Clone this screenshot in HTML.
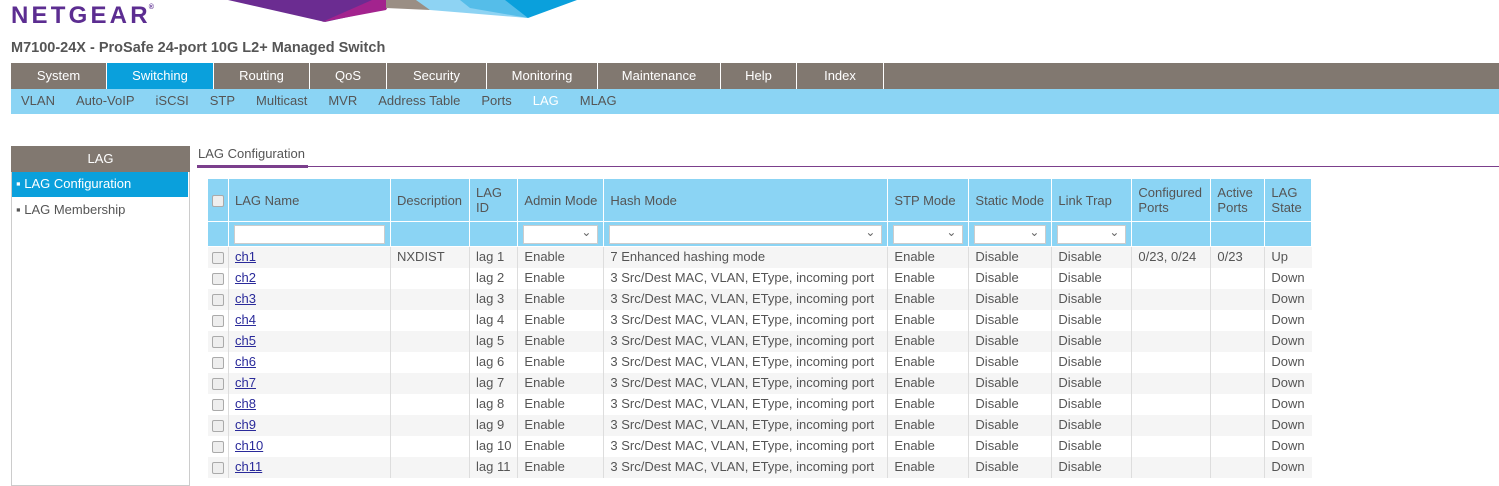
<!DOCTYPE html>
<html><head><meta charset="utf-8"><style>
*{box-sizing:border-box;margin:0;padding:0}
body{width:1499px;height:480px;overflow:hidden;background:#fff;font-family:"Liberation Sans",Arial,sans-serif;position:relative;color:#555}
.abs{position:absolute}
.logo{left:11px;top:2px;font-size:24px;font-weight:bold;color:#5c2d91;letter-spacing:3.2px}
.logo sup{font-size:7px;vertical-align:top;letter-spacing:0;position:relative;top:2px;left:-2px}
.title{left:11px;top:40px;font-size:14.5px;font-weight:bold;color:#555;letter-spacing:0}
.nav{left:11px;top:63px;width:1488px;height:26px;background:#817870;display:flex}
.nav div{color:#fff;font-size:13px;text-align:center;line-height:25px;border-right:1px solid #fff;height:26px}
.nav .on{background:#0aa0dc}
.sub{left:11px;top:89px;width:1488px;height:25px;background:#8bd4f4;font-size:13px;line-height:24px;color:#555}
.sub span{margin-left:9px;margin-right:12px}
.lp{left:11px;top:146px;width:179px;height:340px;border:1px solid #ccc;border-top:none}
.lph{left:11px;top:146px;width:179px;height:26px;background:#817870;color:#fff;font-size:13px;text-align:center;line-height:25px}
.lpa{left:12px;top:172px;width:176px;height:25px;background:#0aa0dc;color:#fff;font-size:13px;line-height:24px;padding-left:4px}
.lpb{left:12px;top:200px;font-size:13px;line-height:20px;padding-left:4px;color:#555}
.tab{left:198px;top:146px;font-size:13px;color:#555}
.tabline{left:197px;top:166px;width:1302px;height:1px;background:#7b3f8c}
.tabul{left:197px;top:165px;width:111px;height:3px;background:#7b3f8c}
table{position:absolute;left:207px;top:178px;border-collapse:collapse;table-layout:fixed;font-size:13px;color:#555}
th{background:#8bd4f4;font-weight:normal;text-align:left;border:1px solid #fff;padding:0 6px;line-height:15px;vertical-align:middle;height:43px}
tr.f td{background:#8bd4f4;height:25px;border:1px solid #fff;padding:0 5px}
td{height:21px;padding:0 6px;border-left:1px solid #ddd;white-space:nowrap;line-height:20px}
tr.g td{background:#f5f5f5}
td a{text-decoration:underline;color:#2a2a9a}
.cb{display:inline-block;width:12px;height:12px;border:1px solid #aaa;border-radius:2px;background:#eee;vertical-align:middle}
.in{background:#fff;border:1px solid #ccc;height:19px;width:100%;position:relative}
.sel::after{content:"⌄";position:absolute;right:6px;top:-4px;font-size:12px;color:#666}
</style></head><body>
<svg class="abs" style="left:0;top:0" width="620" height="30">
<polygon points="228,0 386,0 385,9 325,22" fill="#6b2c91"/>
<polygon points="372,0 392,0 386,10 322,22" fill="#a3238e"/>
<polygon points="386,0 420,0 430,10 386,8" fill="#9a8e84"/>
<polygon points="416,0 510,0 528,18 430,10" fill="#8ed3f3"/>
<polygon points="460,0 520,0 528,18 470,8" fill="#55bde9"/>
<polygon points="505,0 577,0 528,18" fill="#0aa0dc"/>
</svg>
<div class="abs logo">NETGEAR<sup>®</sup></div>
<div class="abs title">M7100-24X - ProSafe 24-port 10G L2+ Managed Switch</div>
<div class="abs nav">
<div style="width:96px">System</div><div class="on" style="width:107px">Switching</div><div style="width:96px">Routing</div><div style="width:77px">QoS</div><div style="width:100px">Security</div><div style="width:111px">Monitoring</div><div style="width:123px">Maintenance</div><div style="width:76px">Help</div><div style="width:87px">Index</div>
</div>
<div class="abs sub"><span style="margin-left:10px">VLAN</span><span>Auto-VoIP</span><span>iSCSI</span><span>STP</span><span>Multicast</span><span>MVR</span><span>Address Table</span><span>Ports</span><span style="color:#fff">LAG</span><span>MLAG</span></div>
<div class="abs lp"></div>
<div class="abs lph">LAG</div>
<div class="abs lpa">▪ LAG Configuration</div>
<div class="abs lpb">▪ LAG Membership</div>
<div class="abs tab">LAG Configuration</div>
<div class="abs tabline"></div><div class="abs tabul"></div>
<table>
<colgroup><col style="width:21px"><col style="width:162px"><col style="width:79px"><col style="width:48px"><col style="width:86px"><col style="width:284px"><col style="width:81px"><col style="width:83px"><col style="width:80px"><col style="width:79px"><col style="width:54px"><col style="width:47px"></colgroup>
<tr><th style="padding:0 4px"><span class="cb"></span></th><th>LAG Name</th><th>Description</th><th>LAG<br>ID</th><th>Admin Mode</th><th>Hash Mode</th><th>STP Mode</th><th>Static Mode</th><th>Link Trap</th><th>Configured<br>Ports</th><th>Active<br>Ports</th><th>LAG<br>State</th></tr>
<tr class="f"><td></td><td><div class="in"></div></td><td></td><td></td><td><div class="in sel"></div></td><td><div class="in sel"></div></td><td><div class="in sel"></div></td><td><div class="in sel"></div></td><td><div class="in sel"></div></td><td></td><td></td><td></td></tr>
<tr class="g"><td style="padding:0 4px;border-left:none"><span class="cb"></span></td><td><a>ch1</a></td><td>NXDIST</td><td>lag 1</td><td>Enable</td><td>7 Enhanced hashing mode</td><td>Enable</td><td>Disable</td><td>Disable</td><td>0/23, 0/24</td><td>0/23</td><td>Up</td></tr>
<tr><td style="padding:0 4px;border-left:none"><span class="cb"></span></td><td><a>ch2</a></td><td></td><td>lag 2</td><td>Enable</td><td>3 Src/Dest MAC, VLAN, EType, incoming port</td><td>Enable</td><td>Disable</td><td>Disable</td><td></td><td></td><td>Down</td></tr>
<tr class="g"><td style="padding:0 4px;border-left:none"><span class="cb"></span></td><td><a>ch3</a></td><td></td><td>lag 3</td><td>Enable</td><td>3 Src/Dest MAC, VLAN, EType, incoming port</td><td>Enable</td><td>Disable</td><td>Disable</td><td></td><td></td><td>Down</td></tr>
<tr><td style="padding:0 4px;border-left:none"><span class="cb"></span></td><td><a>ch4</a></td><td></td><td>lag 4</td><td>Enable</td><td>3 Src/Dest MAC, VLAN, EType, incoming port</td><td>Enable</td><td>Disable</td><td>Disable</td><td></td><td></td><td>Down</td></tr>
<tr class="g"><td style="padding:0 4px;border-left:none"><span class="cb"></span></td><td><a>ch5</a></td><td></td><td>lag 5</td><td>Enable</td><td>3 Src/Dest MAC, VLAN, EType, incoming port</td><td>Enable</td><td>Disable</td><td>Disable</td><td></td><td></td><td>Down</td></tr>
<tr><td style="padding:0 4px;border-left:none"><span class="cb"></span></td><td><a>ch6</a></td><td></td><td>lag 6</td><td>Enable</td><td>3 Src/Dest MAC, VLAN, EType, incoming port</td><td>Enable</td><td>Disable</td><td>Disable</td><td></td><td></td><td>Down</td></tr>
<tr class="g"><td style="padding:0 4px;border-left:none"><span class="cb"></span></td><td><a>ch7</a></td><td></td><td>lag 7</td><td>Enable</td><td>3 Src/Dest MAC, VLAN, EType, incoming port</td><td>Enable</td><td>Disable</td><td>Disable</td><td></td><td></td><td>Down</td></tr>
<tr><td style="padding:0 4px;border-left:none"><span class="cb"></span></td><td><a>ch8</a></td><td></td><td>lag 8</td><td>Enable</td><td>3 Src/Dest MAC, VLAN, EType, incoming port</td><td>Enable</td><td>Disable</td><td>Disable</td><td></td><td></td><td>Down</td></tr>
<tr class="g"><td style="padding:0 4px;border-left:none"><span class="cb"></span></td><td><a>ch9</a></td><td></td><td>lag 9</td><td>Enable</td><td>3 Src/Dest MAC, VLAN, EType, incoming port</td><td>Enable</td><td>Disable</td><td>Disable</td><td></td><td></td><td>Down</td></tr>
<tr><td style="padding:0 4px;border-left:none"><span class="cb"></span></td><td><a>ch10</a></td><td></td><td>lag 10</td><td>Enable</td><td>3 Src/Dest MAC, VLAN, EType, incoming port</td><td>Enable</td><td>Disable</td><td>Disable</td><td></td><td></td><td>Down</td></tr>
<tr class="g"><td style="padding:0 4px;border-left:none"><span class="cb"></span></td><td><a>ch11</a></td><td></td><td>lag 11</td><td>Enable</td><td>3 Src/Dest MAC, VLAN, EType, incoming port</td><td>Enable</td><td>Disable</td><td>Disable</td><td></td><td></td><td>Down</td></tr>
</table>
</body></html>
